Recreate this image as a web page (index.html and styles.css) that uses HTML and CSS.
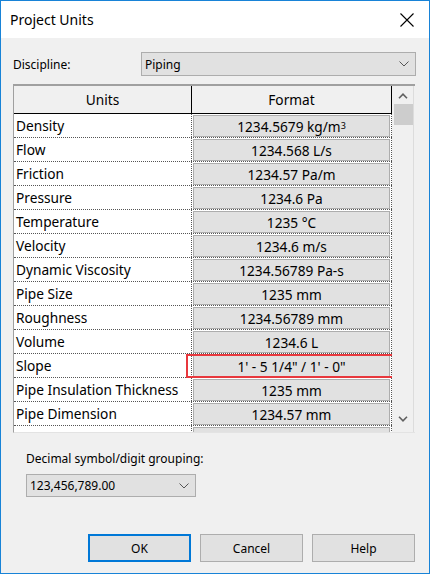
FILE: index.html
```html
<!DOCTYPE html>
<html>
<head>
<meta charset="utf-8">
<link rel="stylesheet" href="styles.css">
</head>
<body>
<div class="window">
  <div class="titlebar">
    <span class="title">Project Units</span>
    <svg class="close" width="14" height="14" viewBox="0 0 14 14"><path d="M0.5 0.5L13.5 13.5M13.5 0.5L0.5 13.5" stroke="#000" stroke-width="1.1" fill="none"/></svg>
  </div>
  <div class="content">
    <div class="discipline">
      <span class="label">Discipline:</span>
      <div class="combo wide">
        <span>Piping</span>
        <svg class="chev" width="10" height="6" viewBox="0 0 10 6"><path d="M0.5 0.5L5 5L9.5 0.5" stroke="#555" stroke-width="1" fill="none"/></svg>
      </div>
    </div>
    <div class="grid">
      <div class="table">
        <div class="head">
          <div class="hcell units">Units</div>
          <div class="hcell format">Format</div>
        </div>
        <div class="row"><div class="name">Density</div><div class="fmt"><div class="btn">1234.5679 kg/m<sup>3</sup></div></div></div>
        <div class="row"><div class="name">Flow</div><div class="fmt"><div class="btn">1234.568 L/s</div></div></div>
        <div class="row"><div class="name">Friction</div><div class="fmt"><div class="btn">1234.57 Pa/m</div></div></div>
        <div class="row"><div class="name">Pressure</div><div class="fmt"><div class="btn">1234.6 Pa</div></div></div>
        <div class="row"><div class="name">Temperature</div><div class="fmt"><div class="btn">1235 °C</div></div></div>
        <div class="row"><div class="name">Velocity</div><div class="fmt"><div class="btn">1234.6 m/s</div></div></div>
        <div class="row"><div class="name">Dynamic Viscosity</div><div class="fmt"><div class="btn">1234.56789 Pa-s</div></div></div>
        <div class="row"><div class="name">Pipe Size</div><div class="fmt"><div class="btn">1235 mm</div></div></div>
        <div class="row"><div class="name">Roughness</div><div class="fmt"><div class="btn">1234.56789 mm</div></div></div>
        <div class="row"><div class="name">Volume</div><div class="fmt"><div class="btn">1234.6 L</div></div></div>
        <div class="row"><div class="name">Slope</div><div class="fmt"><div class="btn">1' - 5 1/4" / 1' - 0"</div><div class="highlight"></div></div></div>
        <div class="row"><div class="name">Pipe Insulation Thickness</div><div class="fmt"><div class="btn">1235 mm</div></div></div>
        <div class="row"><div class="name">Pipe Dimension</div><div class="fmt"><div class="btn">1234.57 mm</div></div></div>
        <div class="row"><div class="name">Mass</div><div class="fmt"><div class="btn">1234.57 kg</div></div></div>
      </div>
      <div class="scrollbar">
        <svg class="arrow" width="10" height="6" viewBox="0 0 10 6"><path d="M1 5.2L5 1.2L9 5.2" stroke="#606060" stroke-width="1.6" fill="none"/></svg>
        <div class="thumb"></div>
        <div class="track"></div>
        <svg class="arrow" width="10" height="6" viewBox="0 0 10 6"><path d="M1 0.8L5 4.8L9 0.8" stroke="#606060" stroke-width="1.6" fill="none"/></svg>
      </div>
    </div>
    <div class="decimal">
      <span class="label">Decimal symbol/digit grouping:</span>
      <div class="combo small">
        <span>123,456,789.00</span>
        <svg class="chev" width="10" height="6" viewBox="0 0 10 6"><path d="M0.5 0.5L5 5L9.5 0.5" stroke="#555" stroke-width="1" fill="none"/></svg>
      </div>
    </div>
    <div class="buttons">
      <div class="button default">OK</div>
      <div class="button">Cancel</div>
      <div class="button">Help</div>
    </div>
  </div>
</div>
</body>
</html>
```
FILE: styles.css
```css
* { box-sizing: border-box; }
html, body { margin: 0; padding: 0; background: #fff; }
body { font-family: "Noto Sans", "Open Sans", sans-serif; font-size: 12px; color: #000; }
.window {
  width: 430px; height: 574px;
  border: 1px solid #1883d7;
  display: flex; flex-direction: column;
  background: #f0f0f0;
}
.titlebar {
  height: 37px; background: #fff;
  display: flex; align-items: center; justify-content: space-between;
  padding: 0 15px 0 9px;
}
.title { font-size: 14px; }
.content { flex: 1; padding: 14px 13px 0 12px; display: flex; flex-direction: column; }
.discipline { display: flex; align-items: center; height: 24px; }
.discipline .label { width: 128px; }
.combo {
  background: #e1e1e1; border: 1px solid #adadad;
  display: flex; align-items: center; justify-content: space-between;
  padding: 0 6px 0 3px;
}
.combo.wide { width: 275px; height: 24px; }
.combo.small { width: 170px; height: 23px; margin-top: 7px; }
.grid {
  margin-top: 8px; width: 402px; height: 349px;
  border-top: 2px solid #a0a0a0; border-left: 1px solid #a0a0a0;
  border-bottom: 1px solid #e3e3e3;
  display: flex; background: #f0f0f0;
}
.table { width: 378px; overflow: hidden; background: #fff; font-size: 13.7px; }
.head { display: flex; height: 28px; border-bottom: 1px solid #000; background: #f0f0f0; }
.hcell { display: flex; align-items: center; justify-content: center; }
.hcell.units { width: 178px; border-right: 1px solid #000; }
.hcell.format { width: 200px; border-right: 1px solid #000; }
.row { display: flex; height: 24px; border-bottom: 1px dotted #555; }
.name { width: 178px; padding-left: 2px; padding-bottom: 1px; display: flex; align-items: center; border-right: 1px dotted #555; white-space: nowrap; }
.fmt { position: relative; width: 200px; padding: 1px 1px 0 1px; border-right: 1px dotted #555; }
.btn {
  height: 22px; background: #e1e1e1; border: 1px solid #adadad;
  display: flex; align-items: center; justify-content: center; white-space: nowrap;
}
.btn sup { font-size: 9px; line-height: 0; vertical-align: 6px; }
.highlight {
  position: absolute; left: -6px; top: 0px; width: 213px; height: 24px;
  border: 2px solid #e8383d;
}
.scrollbar {
  width: 22px; display: flex; flex-direction: column; align-items: center;
  border-right: 1px solid #dcdcdc; background: #f0f0f0;
}
.arrow { margin: 7px 0 0; flex: none; }
.thumb { width: 19px; height: 21px; background: #cdcdcd; margin-top: 5px; margin-left: 1px; }
.track { flex: 1; }
.scrollbar .arrow:last-child { margin: 0 0 10px; }
.decimal { margin-top: 17px; padding-left: 13px; display: flex; flex-direction: column; }
.buttons { display: flex; gap: 9px; margin-top: 37px; padding-left: 75px; }
.button {
  width: 103px; height: 28px; background: #e1e1e1; border: 1px solid #adadad;
  display: flex; align-items: center; justify-content: center;
}
.button.default { border: 2px solid #0078d7; }
```
